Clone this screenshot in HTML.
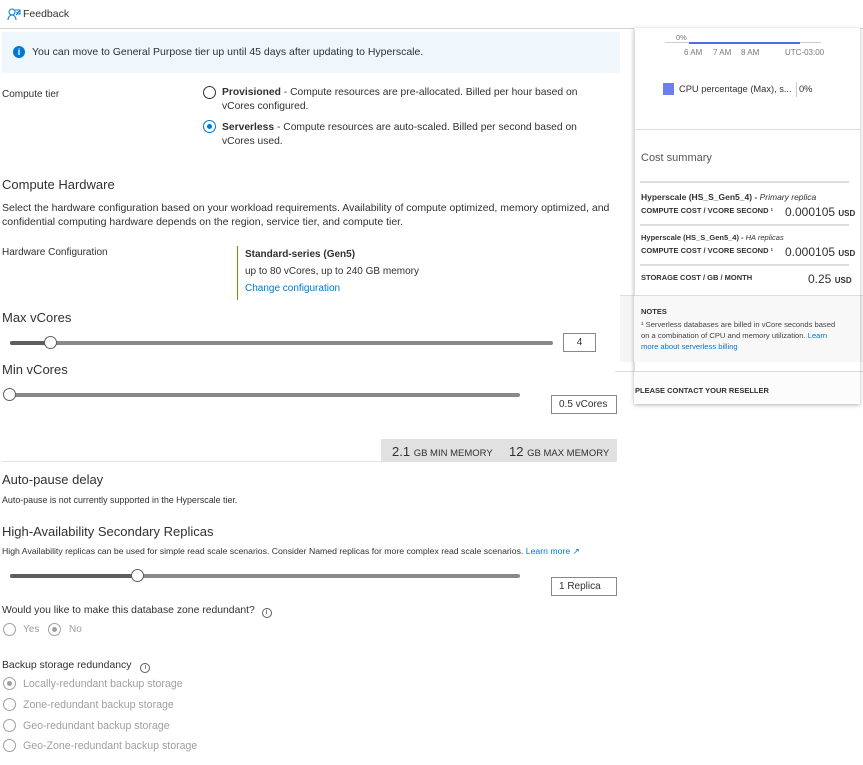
<!DOCTYPE html>
<html><head><meta charset="utf-8"><style>
*{margin:0;padding:0;box-sizing:border-box}
body{width:863px;height:765px;background:#fff;font-family:"Liberation Sans",sans-serif;color:#323130;position:relative;overflow:hidden}
.a{position:absolute;white-space:nowrap}
.s11{font-size:10.5px}.s10{font-size:10px}.h{font-size:13px}
.rad{position:absolute;width:13px;height:13px;border-radius:50%;border:1px solid #323130;background:#fff}
.dis{border-color:#a19f9d}
.dot::after{content:"";position:absolute;left:3px;top:3px;width:5px;height:5px;border-radius:50%;background:#a19f9d}
.track{position:absolute;height:4px;background:#8a8886;border-radius:2px}
.fill{position:absolute;height:4px;background:#605e5c;border-radius:2px}
.thumb{position:absolute;width:13px;height:13px;border-radius:50%;border:1.5px solid #605e5c;background:#fff}
.box{position:absolute;border:1px solid #8a8886;font-size:10px;padding-left:7px;line-height:17px}
.g{color:#a19f9d}
.l{color:#0078d4}
.b{font-weight:bold}
</style></head><body>
<svg class="a" style="left:7px;top:7px" width="14" height="14" viewBox="0 0 14 14" fill="none" stroke="#0078d4" stroke-width="1"><circle cx="5" cy="5" r="3"/><path d="M1 13c0-3 2-5 4-5s4 2 4 5"/><path d="M8 3h5v4h-3l-1 1"/><path d="M9.5 5l1 1 2-2"/></svg>
<div class="a s11" style="left:23px;top:8px">Feedback</div>
<div class="a" style="left:0;top:28px;width:863px;height:1px;background:#d0d0d0"></div>
<div class="a" style="left:2px;top:32px;width:618px;height:41px;background:#eff6fc"></div>
<div class="a" style="left:13px;top:46px;width:12px;height:12px;border-radius:50%;background:#0078d4;color:#fff;font-size:9px;font-weight:bold;text-align:center;line-height:12px">i</div>
<div class="a" style="left:32px;top:46px;font-size:10.5px">You can move to General Purpose tier up until 45 days after updating to Hyperscale.</div>
<div class="a s10" style="left:2px;top:89px">Compute tier</div>
<div class="rad" style="left:203px;top:86px"></div>
<div class="a" style="left:222px;top:86px;line-height:14px;font-size:10.3px"><b>Provisioned</b> - Compute resources are pre-allocated. Billed per hour based on<br>vCores configured.</div>
<div class="rad" style="left:203px;top:120px;border-color:#0078d4"><div style="position:absolute;left:3px;top:3px;width:5px;height:5px;border-radius:50%;background:#0078d4"></div></div>
<div class="a" style="left:222px;top:121px;line-height:14px;font-size:10.3px"><b>Serverless</b> - Compute resources are auto-scaled. Billed per second based on<br>vCores used.</div>
<div class="a h" style="left:2px;top:177px">Compute Hardware</div>
<div class="a" style="left:2px;top:201px;line-height:14px;font-size:10.5px">Select the hardware configuration based on your workload requirements. Availability of compute optimized, memory optimized, and<br>confidential computing hardware depends on the region, service tier, and compute tier.</div>
<div class="a s10" style="left:2px;top:247px">Hardware Configuration</div>
<div class="a" style="left:237px;top:246px;width:1px;height:54px;background:#57a300"></div>
<div class="a s10 b" style="left:245px;top:249px">Standard-series (Gen5)</div>
<div class="a s10" style="left:245px;top:266px">up to 80 vCores, up to 240 GB memory</div>
<div class="a s10 l" style="left:245px;top:283px">Change configuration</div>
<div class="a h" style="left:2px;top:310px">Max vCores</div>
<div class="track" style="left:10px;top:341px;width:543px"></div>
<div class="fill" style="left:10px;top:341px;width:38px"></div>
<div class="thumb" style="left:44px;top:336px"></div>
<div class="box" style="left:563px;top:333px;width:33px;height:19px;padding:0;text-align:center">4</div>
<div class="a h" style="left:2px;top:362px">Min vCores</div>
<div class="track" style="left:10px;top:393px;width:510px"></div>
<div class="thumb" style="left:3px;top:388px"></div>
<div class="box" style="left:551px;top:395px;width:66px;height:19px">0.5 vCores</div>
<div class="a" style="left:381px;top:439px;width:236px;height:23px;background:#e1e1e1"></div>
<div class="a" style="left:392px;top:444px;font-size:13px">2.1 <span style="font-size:9.5px">GB MIN MEMORY</span></div>
<div class="a" style="left:509px;top:444px;font-size:13px">12 <span style="font-size:9.5px">GB MAX MEMORY</span></div>
<div class="a" style="left:2px;top:461px;width:379px;height:1px;background:#e1e1e1"></div>
<div class="a h" style="left:2px;top:472px">Auto-pause delay</div>
<div class="a" style="left:2px;top:495px;font-size:8.9px">Auto-pause is not currently supported in the Hyperscale tier.</div>
<div class="a h" style="left:2px;top:524px">High-Availability Secondary Replicas</div>
<div class="a" style="left:2px;top:546px;font-size:8.7px">High Availability replicas can be used for simple read scale scenarios. Consider Named replicas for more complex read scale scenarios. <span class="l">Learn more ↗</span></div>
<div class="track" style="left:10px;top:574px;width:510px"></div>
<div class="fill" style="left:10px;top:574px;width:124px"></div>
<div class="thumb" style="left:131px;top:569px"></div>
<div class="box" style="left:551px;top:577px;width:66px;height:19px">1 Replica</div>
<div class="a" style="left:2px;top:605px;font-size:10.4px">Would you like to make this database zone redundant? <span style="display:inline-block;width:10px;height:10px;border:1px solid #605e5c;border-radius:50%;font-size:7px;text-align:center;line-height:8px;vertical-align:-1px;margin-left:4px">i</span></div>
<div class="rad dis" style="left:3px;top:623px"></div>
<div class="a s10 g" style="left:23px;top:624px">Yes</div>
<div class="rad dis dot" style="left:48px;top:623px"></div>
<div class="a s10 g" style="left:69px;top:624px">No</div>
<div class="a" style="left:2px;top:660px;font-size:10.4px">Backup storage redundancy <span style="display:inline-block;width:10px;height:10px;border:1px solid #605e5c;border-radius:50%;font-size:7px;text-align:center;line-height:8px;vertical-align:-1px;margin-left:6px">i</span></div>
<div class="rad dis dot" style="left:3px;top:677px"></div><div class="a g" style="left:23px;top:678px;font-size:10.6px">Locally-redundant backup storage</div>
<div class="rad dis" style="left:3px;top:698px"></div><div class="a g" style="left:23px;top:699px;font-size:10.6px">Zone-redundant backup storage</div>
<div class="rad dis" style="left:3px;top:719px"></div><div class="a g" style="left:23px;top:720px;font-size:10.6px">Geo-redundant backup storage</div>
<div class="rad dis" style="left:3px;top:739px"></div><div class="a g" style="left:23px;top:740px;font-size:10.6px">Geo-Zone-redundant backup storage</div>
<div class="a" style="left:620px;top:295px;width:243px;height:67px;background:#f5f5f5;border-top:1px solid #ddd"></div>
<div class="a" style="left:615px;top:371px;width:248px;height:1px;background:#ddd"></div>
<div class="a" style="left:634px;top:28px;width:226px;height:376px;background:#fff;box-shadow:0 1px 4px rgba(0,0,0,.3);border-left:1px solid #ddd"></div>
<div class="a" style="left:634px;top:295px;width:226px;height:67px;background:#f8f8f8;border-top:1px solid #ddd"></div>
<div class="a" style="left:634px;top:371px;width:226px;height:33px;background:#fcfcfc;border-top:1px solid #ddd"></div>
<div class="a" style="left:634px;top:129px;width:226px;height:1px;background:#ddd"></div>
<div class="a" style="left:676px;top:33px;font-size:7.5px;color:#777">0%</div>
<div class="a" style="left:665px;top:42px;width:156px;height:1px;background:#ccc"></div>
<div class="a" style="left:689px;top:42px;width:111px;height:2px;background:#4f6bed"></div>
<div class="a" style="left:684px;top:48px;font-size:8px;color:#777">6 AM</div>
<div class="a" style="left:713px;top:48px;font-size:8px;color:#777">7 AM</div>
<div class="a" style="left:741px;top:48px;font-size:8px;color:#777">8 AM</div>
<div class="a" style="left:785px;top:48px;font-size:8px;color:#777">UTC-03:00</div>
<div class="a" style="left:663px;top:83px;width:11px;height:12px;background:#6b80ee"></div>
<div class="a" style="left:679px;top:84px;font-size:9.3px">CPU percentage (Max), s...</div>
<div class="a" style="left:796px;top:82px;width:1px;height:15px;background:#ccc"></div>
<div class="a" style="left:799px;top:84px;font-size:9.3px">0%</div>
<div class="a" style="left:641px;top:152px;font-size:11px;color:#555">Cost summary</div>
<div class="a" style="left:640px;top:181px;width:209px;height:2px;background:#ddd"></div>
<div class="a b" style="left:641px;top:192px;font-size:8.5px">Hyperscale (HS_S_Gen5_4) - <i style="font-weight:normal">Primary replica</i></div>
<div class="a b" style="left:641px;top:206px;font-size:7.5px">COMPUTE COST / VCORE SECOND ¹</div>
<div class="a" style="left:785px;top:205px;font-size:12px">0.000105 <span class="b" style="font-size:8px">USD</span></div>
<div class="a" style="left:640px;top:224px;width:209px;height:2px;background:#ddd"></div>
<div class="a b" style="left:641px;top:233px;font-size:7.5px">Hyperscale (HS_S_Gen5_4) - <i style="font-weight:normal">HA replicas</i></div>
<div class="a b" style="left:641px;top:246px;font-size:7.5px">COMPUTE COST / VCORE SECOND ¹</div>
<div class="a" style="left:785px;top:245px;font-size:12px">0.000105 <span class="b" style="font-size:8px">USD</span></div>
<div class="a" style="left:640px;top:264px;width:209px;height:2px;background:#ddd"></div>
<div class="a b" style="left:641px;top:273px;font-size:7.5px">STORAGE COST / GB / MONTH</div>
<div class="a" style="left:808px;top:272px;font-size:12px">0.25 <span class="b" style="font-size:8px">USD</span></div>
<div class="a b" style="left:641px;top:307px;font-size:7.5px">NOTES</div>
<div class="a" style="left:641px;top:319px;font-size:7.6px;line-height:11px;color:#444">¹ Serverless databases are billed in vCore seconds based<br>on a combination of CPU and memory utilization. <span class="l">Learn<br>more about serverless billing</span></div>
<div class="a b" style="left:635px;top:386px;font-size:7.5px">PLEASE CONTACT YOUR RESELLER</div>
</body></html>
